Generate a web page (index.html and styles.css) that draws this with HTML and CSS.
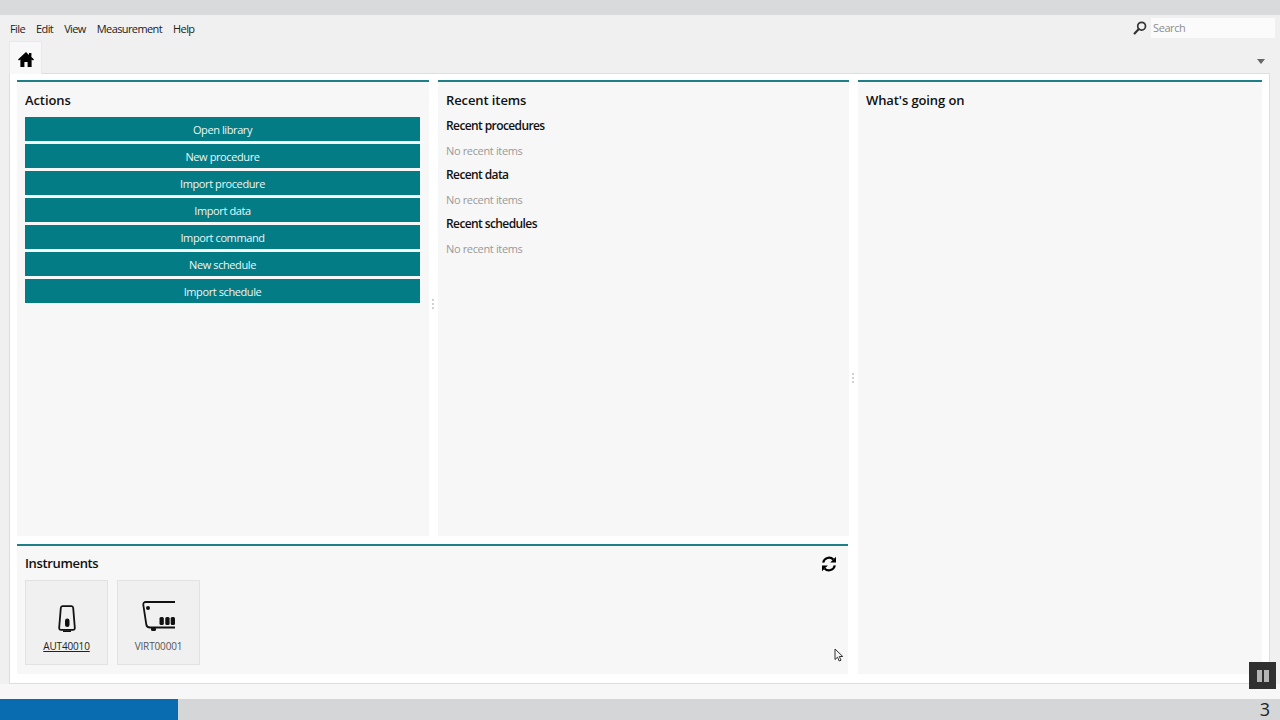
FILE: index.html
```html
<!DOCTYPE html>
<html lang="en">
<head>
<meta charset="utf-8">
<title>Home</title>
<link rel="stylesheet" href="styles.css">
</head>
<body>
<div class="titlebar"></div>
<div class="app">
  <header class="menubar">
    <nav class="menu">
      <span>File</span><span>Edit</span><span>View</span><span>Measurement</span><span>Help</span>
    </nav>
    <div class="search">
      <svg class="search-icon" viewBox="0 0 14 14" width="14" height="14"><circle cx="8.6" cy="5.2" r="3.9" fill="none" stroke="#333" stroke-width="1.7"/><path d="M5.8 8 1.6 12.4" stroke="#333" stroke-width="2.2" stroke-linecap="round"/></svg>
      <div class="search-box">Search</div>
    </div>
  </header>
  <div class="tabstrip">
    <div class="tab">
      <svg viewBox="0 0 16 15" width="16" height="15"><path d="M8 0 0 7.4 1 8.6 2.4 7.4V15H6.4V10H9.6V15H13.6V7.4L15 8.6 16 7.4 13.4 5V1H11V2.9Z" fill="#000"/></svg>
    </div>
    <div class="tab-arrow"></div>
  </div>
  <main class="workspace">
    <div class="columns">
      <div class="left-area">
        <div class="top-panels">
          <section class="panel actions">
            <h2>Actions</h2>
            <div class="buttons">
              <button>Open library</button>
              <button>New procedure</button>
              <button>Import procedure</button>
              <button>Import data</button>
              <button>Import command</button>
              <button>New schedule</button>
              <button>Import schedule</button>
            </div>
            <i class="grip grip-a"></i>
          </section>
          <section class="panel recent">
            <h2>Recent items</h2>
            <h3>Recent procedures</h3>
            <p>No recent items</p>
            <h3>Recent data</h3>
            <p>No recent items</p>
            <h3>Recent schedules</h3>
            <p>No recent items</p>
          </section>
        </div>
        <section class="panel instruments">
          <div class="inst-head">
            <h2>Instruments</h2>
            <svg class="refresh" viewBox="0 0 16 16" width="16" height="16"><path d="M2.2 6.6A6 6 0 0 1 12.4 3.6" fill="none" stroke="#000" stroke-width="2.2"/><path d="M15 .8V6.6H9.2Z" fill="#000"/><path d="M13.8 9.4A6 6 0 0 1 3.6 12.4" fill="none" stroke="#000" stroke-width="2.2"/><path d="M1 15.2V9.4H6.8Z" fill="#000"/></svg>
          </div>
          <div class="inst-list">
            <div class="inst">
              <svg viewBox="0 0 18 27" width="18" height="27"><path d="M4.500 1.200H13.500Q15 1.200 15.200 3L16.800 22.500Q17 24.800 15 24.800H3Q1 24.800 1.200 22.500L2.800 3Q3 1.200 4.500 1.200Z" fill="none" stroke="#111" stroke-width="1.800"/><rect x="7" y="13.500" width="4.500" height="8.500" rx="2.200" fill="#111"/><path d="M5 26.200H13" stroke="#111" stroke-width="1.600"/></svg>
              <span class="inst-name current">AUT40010</span>
            </div>
            <div class="inst">
              <svg viewBox="0 0 33 31" width="33" height="31"><path d="M33 1H4Q1 1 1.300 4L4.300 23.500Q4.800 26.500 8 26.500H33" fill="none" stroke="#111" stroke-width="1.800"/><circle cx="6" cy="7" r="2" fill="#111"/><rect x="17.500" y="16" width="4.300" height="8" rx="1.500" fill="#111"/><rect x="23.300" y="16" width="4.300" height="8" rx="1.500" fill="#111"/><rect x="28.700" y="16" width="4.300" height="8" rx="1.500" fill="#111"/><rect x="9" y="26" width="5" height="4" rx="1.500" fill="#111"/></svg>
              <span class="inst-name">VIRT00001</span>
            </div>
          </div>
          <svg class="cursor" viewBox="0 0 10 14" width="10" height="14"><path d="M1 1V11.500L3.500 9.200 5.200 13 7 12.200 5.300 8.500H8.800Z" fill="#f4f4f4" stroke="#333" stroke-width="1"/></svg>
        </section>
      </div>
      <section class="panel news">
        <h2>What's going on</h2>
        <i class="grip grip-b"></i>
      </section>
    </div>
  </main>
  <div class="app-foot"></div>
</div>
<footer class="progress">
  <div class="progress-fill"></div>
  <div class="count">3</div>
</footer>
<div class="pause"><i></i><i></i></div>
</body>
</html>
```
FILE: styles.css
```css
* { box-sizing: border-box; }
html, body { margin: 0; height: 100%; }
body {
  width: 1280px;
  height: 720px;
  overflow: hidden;
  display: flex;
  flex-direction: column;
  font-family: "Open Sans", "Noto Sans", sans-serif;
  background: #f0f0f0;
  color: #111;
  position: relative;
}
.titlebar { height: 15px; background: #d9dadb; flex: none; }
.app { height: 684px; flex: none; display: flex; flex-direction: column; }
.menubar {
  height: 26px;
  display: flex;
  justify-content: space-between;
  align-items: center;
  padding: 0 5px 0 10px;
}
.menu { display: flex; gap: 11px; font-size: 11px; color: #222; letter-spacing: -.6px; padding-top: 1px; }
.search { display: flex; align-items: center; gap: 4px; }
.search-box {
  width: 124px;
  height: 20px;
  background: #fbfbfb;
  color: #8d8d8d;
  font-size: 11px;
  line-height: 20px;
  letter-spacing: -.4px;
  padding-left: 2px;
}
.tabstrip {
  height: 32px;
  position: relative;
  display: flex;
  justify-content: space-between;
  align-items: flex-end;
  padding: 0 15px 0 9px;
}
.tab {
  width: 33px;
  height: 33px;
  background: #f8f8f8;
  border: 1px solid #e8e8e8;
  border-bottom: 0;
  display: flex;
  align-items: center;
  justify-content: center;
  padding-top: 2px;
  margin-bottom: -1px;
  position: relative;
  z-index: 1;
}
.tab-arrow {
  width: 0;
  height: 0;
  border: 4px solid transparent;
  border-top: 5px solid #666;
  border-bottom: 0;
  margin-bottom: 9px;
}
.workspace {
  height: 611px;
  margin: 0 10px 0 9px;
  background: #fff;
  border: 1px solid #dedede;
  padding: 6px 7px 9px 7px;
}
.columns { display: flex; gap: 9px; height: 100%; }
.left-area { width: 832px; flex: none; display: flex; flex-direction: column; gap: 8px; }
.top-panels { display: flex; gap: 9px; height: 456px; flex: none; }
.panel {
  background: #f7f7f7;
  border-top: 2px solid #1f7f88;
  position: relative;
}
h2 { margin: 0; font-size: 13px; font-weight: 600; line-height: 18px; color: #111; letter-spacing: -.1px; }
h3 { margin: 0; font-size: 12px; font-weight: 600; line-height: 16px; color: #111; letter-spacing: -.6px; }
.actions { width: 412px; padding: 9px 8px 0 8px; }
.buttons { display: flex; flex-direction: column; gap: 3px; margin-top: 8px; width: 395px; }
button {
  height: 24px;
  border: 0;
  padding: 0;
  background: #037c85;
  color: #e9f7f7;
  font: 11px "Open Sans", "Noto Sans", sans-serif;
  letter-spacing: -.4px;
}
.recent { width: 411px; padding: 9px 8px 0 8px; }
.recent h2 { margin-bottom: 9px; }
.recent h3 { margin-bottom: 9px; }
.recent p { margin: 0 0 8.500px; font-size: 11px; line-height: 15.500px; color: #999; letter-spacing: -.35px; }
.instruments { height: 131px; padding: 8px 8px 0 8px; margin-right: 1px; }
.inst-head { display: flex; justify-content: space-between; align-items: flex-start; padding-right: 3px; }
.inst-head h2 { letter-spacing: -.35px; }
.refresh { margin-top: 2px; }
.inst-list { display: flex; gap: 9px; margin-top: 8px; }
.inst {
  width: 83px;
  height: 85px;
  background: #f0f0f0;
  border: 1px solid #e2e2e2;
  display: flex;
  flex-direction: column;
  align-items: center;
  justify-content: flex-end;
  padding-bottom: 11px;
  gap: 7px;
}
.inst svg { display: block; }
.inst-name { font-size: 10px; line-height: 14px; color: #555; letter-spacing: -.15px; }
.inst-name.current { color: #222; text-decoration: underline; }
.news { flex: 1; padding: 9px 8px 0 8px; }
.grip {
  position: absolute;
  width: 2px;
  height: 2px;
  background: #d2d2d2;
  box-shadow: 0 4px #d2d2d2, 0 8px #d2d2d2;
}
.grip-a { right: -5px; top: 217px; }
.grip-b { left: -6px; top: 291px; }
.cursor { position: absolute; left: 817px; top: 102px; }
.app-foot { flex: 1; background: #f7f7f7; }
.progress { height: 21px; flex: none; background: #d5d6d8; display: flex; justify-content: space-between; }
.progress-fill { width: 178px; background: #0a6cb0; }
.count { font-size: 18px; line-height: 21px; padding-right: 10px; color: #222; }
.pause {
  position: absolute;
  left: 1249px;
  top: 662px;
  width: 27px;
  height: 27px;
  background: #303030;
  display: flex;
  justify-content: center;
  align-items: center;
  gap: 2px;
}
.pause i { width: 5px; height: 12px; background: #b5b5b5; }
```
